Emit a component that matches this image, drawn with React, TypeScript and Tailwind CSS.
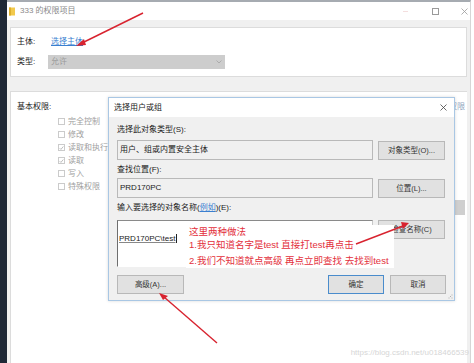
import React from "react";

function Check({ label, checked }: { label: string; checked?: boolean }) {
  return (
    <div className="flex h-[13px] items-center gap-[3px]">
      <span className="flex h-[7px] w-[7px] items-center justify-center border border-[#cbcbcb] bg-white">
        {checked && (
          <svg width="6" height="6" viewBox="0 0 6 6">
            <path d="M0.8 3.2 L2.3 4.7 L5.2 1.2" fill="none" stroke="#a8a8a8" strokeWidth="0.9" />
          </svg>
        )}
      </span>
      <span className="text-[8px] leading-[13px] text-[#a0a0a0]">{label}</span>
    </div>
  );
}

function Btn({ children, w, primary }: { children: React.ReactNode; w: string; primary?: boolean }) {
  return (
    <div
      className={
        (primary ? "border-[#4a8ccc] " : "border-[#b8b8b8] ") +
        w +
        " flex h-[19px] items-center justify-center border bg-[#e1e1e1] text-[7.5px] text-[#333]"
      }
    >
      {children}
    </div>
  );
}

export default function App() {
  return (
    <div className="relative flex h-[363px] w-[474px] overflow-hidden bg-white font-['Liberation_Sans','Noto_Sans_CJK_SC',sans-serif] text-[#222]">
      {/* desktop strip on the left */}
      <div className="w-[7px] bg-[#1e2836]" />

      {/* permissions window */}
      <div className="flex w-[464px] flex-col border-t-2 border-r border-[#a6abb1] border-r-[#d6d6d6] bg-[#f0f0f0]">
        <div className="flex h-[18px] items-center bg-white pl-[2px]">
          <svg width="6" height="9" viewBox="0 0 6 9" className="mt-[1px]">
            <rect x="0" y="0.5" width="6" height="8" fill="#f2c94c" />
            <rect x="0" y="0.5" width="2" height="8" fill="#dcae2c" />
          </svg>
          <span className="ml-[5px] text-[8px] leading-[10px] text-[#8a8a8a]">333 的权限项目</span>
          <div className="ml-auto flex items-center">
            <span className="mr-[24px] h-[1px] w-[5px] bg-[#f4dede]" />
            <span className="mr-[22px] h-[7px] w-[7px] border border-[#9a9a9a]" />
            <svg width="7" height="7" viewBox="0 0 7 7" className="mr-[2px]">
              <path d="M0.5 0.5 L6.5 6.5 M6.5 0.5 L0.5 6.5" stroke="#9a9a9a" strokeWidth="0.8" />
            </svg>
          </div>
        </div>

        <div className="flex flex-1 flex-col px-[3px] pt-[7px]">
          {/* subject / type */}
          <div className="h-[50px] border border-[#dcdcdc] bg-white pt-[4px] pl-[6px]">
            <div className="flex h-[20px] items-center">
              <span className="w-[34px] text-[8px] leading-[10px]">主体:</span>
              <span className="text-[8px] leading-[10px] text-[#3a7fd0] underline">选择主体</span>
            </div>
            <div className="flex h-[20px] items-center">
              <span className="w-[31px] text-[8px] leading-[10px]">类型:</span>
              <div className="flex h-[14px] w-[177px] items-center justify-between bg-[#cdcdcd] px-[3px]">
                <span className="text-[8px] leading-[10px] text-[#9a9a9a]">允许</span>
                <svg width="6" height="4" viewBox="0 0 6 4">
                  <path d="M0.5 0.5 L3 3 L5.5 0.5" fill="none" stroke="#a3a3a3" strokeWidth="0.8" />
                </svg>
              </div>
            </div>
          </div>

          {/* basic permissions */}
          <div className="mt-[14px] flex flex-1 border border-r-0 border-b-0 border-[#dcdcdc] bg-white pt-[8px] pl-[6px]">
            <div className="flex flex-col">
              <span className="h-[14px] text-[8px] leading-[14px]">基本权限:</span>
              <div className="mt-[1px] ml-[41px] flex flex-col">
                <Check label="完全控制" />
                <Check label="修改" />
                <Check label="读取和执行" checked />
                <Check label="读取" checked />
                <Check label="写入" />
                <Check label="特殊权限" />
              </div>
            </div>
            <div className="ml-auto mr-[2px] flex flex-col items-end">
              <span className="h-[14px] text-[8px] leading-[14px] text-[#8fa5c0]">权限</span>
              <span className="mt-[86px] h-[15px] w-[10px] bg-[#cfcfcf]" />
            </div>
          </div>
        </div>
      </div>
      <div className="flex-1 bg-white" />

      {/* select users or groups dialog */}
      <div className="absolute top-[97px] left-[108px] flex h-[204px] w-[347px] flex-col border border-[#a9c7e4] bg-[#f0f0f0] shadow-[0_0_3px_rgba(0,0,0,0.15)]">
        <div className="flex h-[19px] items-center justify-between bg-white pr-[7px] pl-[5px]">
          <span className="text-[8px] leading-[10px]">选择用户或组</span>
          <svg width="7" height="7" viewBox="0 0 7 7">
            <path d="M0.5 0.5 L6.5 6.5 M6.5 0.5 L0.5 6.5" stroke="#444" strokeWidth="0.8" />
          </svg>
        </div>
        <div className="flex flex-1 flex-col px-[8px] pt-[6px]">
          <span className="h-[14px] text-[8px] leading-[14px]">选择此对象类型(S):</span>
          <div className="mt-[3px] flex items-start gap-[5px]">
            <div className="flex h-[20px] w-[256px] items-center border border-[#b9b9b9] px-[2px] text-[8px]">
              用户、组或内置安全主体
            </div>
            <div className="mt-[1px]">
              <Btn w="w-[67px]">对象类型(O)...</Btn>
            </div>
          </div>
          <span className="mt-[3px] h-[14px] text-[8px] leading-[14px]">查找位置(F):</span>
          <div className="mt-[1px] flex items-start gap-[5px]">
            <div className="flex h-[20px] w-[256px] items-center border border-[#b9b9b9] px-[2px] text-[8px]">
              PRD170PC
            </div>
            <div className="mt-[1px]">
              <Btn w="w-[67px]">位置(L)...</Btn>
            </div>
          </div>
          <span className="mt-[3px] h-[14px] text-[8px] leading-[14px]">
            输入要选择的对象名称(<span className="text-[#3a7fd0] underline">例如</span>)(E):
          </span>
          <div className="mt-[5px] flex items-start gap-[5px]">
            <div className="h-[47px] w-[256px] border border-t-[#8a8a8a] border-l-[#6e6e6e] border-r-[#c8c8c8] border-b-white bg-white px-[1px] pt-[3px]">
              <span className="border-r border-[#222] pr-[1px] text-[8px] leading-[10px] underline decoration-[#888]">
                PRD170PC\test
              </span>
            </div>
            <Btn w="w-[67px]">检查名称(C)</Btn>
          </div>
          <div className="mt-[8px] flex items-center">
            <Btn w="w-[67px]">高级(A)...</Btn>
            <div className="ml-auto flex gap-[6px]">
              <Btn w="w-[56px]" primary>
                确定
              </Btn>
              <Btn w="w-[56px]">取消</Btn>
            </div>
          </div>
        </div>
        <svg width="5" height="5" viewBox="0 0 5 5" className="absolute right-[1px] bottom-[1px]">
          <rect x="3.5" y="0.5" width="1" height="1" fill="#b0b0b0" />
          <rect x="3.5" y="3.5" width="1" height="1" fill="#b0b0b0" />
          <rect x="0.5" y="3.5" width="1" height="1" fill="#b0b0b0" />
          <rect x="2" y="2" width="1" height="1" fill="#b0b0b0" />
        </svg>
      </div>

      {/* red annotation */}
      <div className="absolute top-[225px] left-[186px] flex w-[208px] flex-col bg-white pl-[3px] text-[9.5px] text-[#e3303c]">
        <span className="h-[13px] leading-[13px]">这里两种做法</span>
        <span className="h-[13px] leading-[13px]">1.我只知道名字是test 直接打test再点击</span>
        <span className="mt-[2px] h-[15px] leading-[15px]">2.我们不知道就点高级 再点立即查找 去找到test</span>
      </div>

      {/* watermark */}
      <span className="absolute right-[5px] bottom-[5px] text-[8px] leading-[10px] text-[#d6d6d6]">
        https://blog.csdn.net/u018466539
      </span>

      {/* arrows */}
      <svg className="pointer-events-none absolute top-0 left-0" width="474" height="363" viewBox="0 0 474 363">
        <g stroke="#d8232f" strokeWidth="1.4" fill="#d8232f">
          <line x1="143" y1="13" x2="82" y2="43" />
          <polygon points="76,46 84,39 86,45" stroke="none" />
          <line x1="217" y1="343" x2="164" y2="297" />
          <polygon points="159,293 168,296 163,300" stroke="none" />
          <line x1="356" y1="244" x2="403" y2="226" />
          <polygon points="409,223 401,222 403,229" stroke="none" />
        </g>
      </svg>
    </div>
  );
}
